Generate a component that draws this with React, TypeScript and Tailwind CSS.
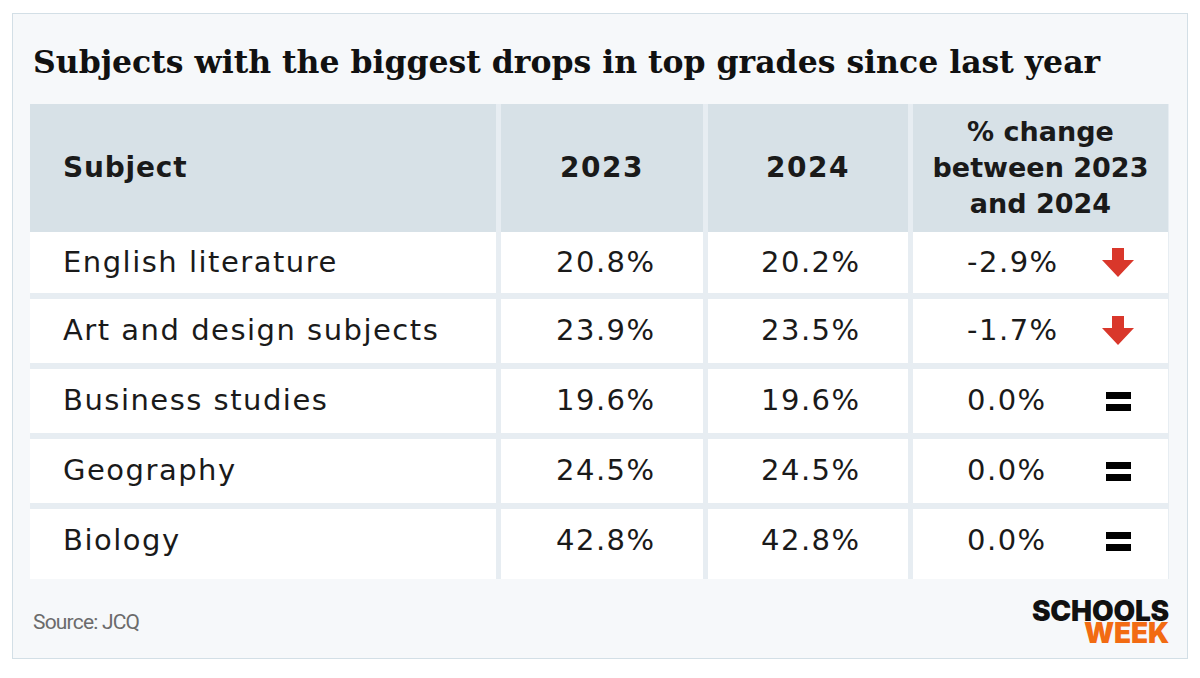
import React from "react";

type Row = { subject: string; y23: string; y24: string; change: string; dir: "down" | "same"; h: string };

const rows: Row[] = [
  { subject: "English literature", y23: "20.8%", y24: "20.2%", change: "-2.9%", dir: "down", h: "h-[61px]" },
  { subject: "Art and design subjects", y23: "23.9%", y24: "23.5%", change: "-1.7%", dir: "down", h: "h-[64px]" },
  { subject: "Business studies", y23: "19.6%", y24: "19.6%", change: "0.0%", dir: "same", h: "h-[64px]" },
  { subject: "Geography", y23: "24.5%", y24: "24.5%", change: "0.0%", dir: "same", h: "h-[64px]" },
  { subject: "Biology", y23: "42.8%", y24: "42.8%", change: "0.0%", dir: "same", h: "h-[70px] pb-[6px]" },
];

function DownArrow() {
  return (
    <svg width="34" height="30" viewBox="0 0 34 30">
      <path d="M11 0 H23 V12 H33 L17 29 L1 12 H11 Z" fill="#d9372b" />
    </svg>
  );
}

function Same() {
  return (
    <div className="flex flex-col gap-[5px]">
      <div className="w-[25px] h-[7px] bg-black" />
      <div className="w-[25px] h-[7px] bg-black" />
    </div>
  );
}

export default function App() {
  const body = "font-['DejaVu_Sans',sans-serif]";
  const cell = "bg-white flex items-center text-[29px] tracking-[1.5px]";
  return (
    <div className="w-[1200px] h-[678px] bg-white pt-[13px] pl-[12px]">
      <div className="w-[1176px] h-[646px] border border-[#d3dfe6] bg-[#f6f8fa] pl-[17px] pt-[26px]">
        <h1 className="font-['DejaVu_Serif',serif] font-bold text-[31.5px] leading-[44px] text-[#111] pl-[3px]">
          Subjects with the biggest drops in top grades since last year
        </h1>
        <div
          className={`mt-[20px] w-[1139px] grid grid-cols-[466px_202px_200px_255px] gap-x-[5px] gap-y-[6px] bg-[#e7edf2] text-[#1a1a1a] ${body}`}
        >
          <div className="h-[128px] bg-[#d7e1e7] flex items-center pl-[33px] font-bold text-[28px] tracking-[0.8px]">Subject</div>
          <div className="h-[128px] bg-[#d7e1e7] flex items-center justify-center font-bold text-[28px] tracking-[1.5px]">2023</div>
          <div className="h-[128px] bg-[#d7e1e7] flex items-center justify-center font-bold text-[28px] tracking-[1.5px]">2024</div>
          <div className="h-[128px] bg-[#d7e1e7] flex items-center justify-center text-center font-bold text-[27px] leading-[36px]">
            % change
            <br />
            between 2023
            <br />
            and 2024
          </div>
          {rows.map((r, i) => {
            const top = i === 0 ? "-mt-[6px]" : "";
            return (
              <React.Fragment key={r.subject}>
                <div className={`${r.h} ${top} ${cell} pl-[33px]`}>{r.subject}</div>
                <div className={`${r.h} ${top} ${cell} pl-[55px]`}>{r.y23}</div>
                <div className={`${r.h} ${top} ${cell} pl-[53px]`}>{r.y24}</div>
                <div className={`${r.h} ${top} ${cell}`}>
                  <span className="pl-[54px] w-[188px]">{r.change}</span>
                  <span className="w-[34px] flex justify-center">{r.dir === "down" ? <DownArrow /> : <Same />}</span>
                </div>
              </React.Fragment>
            );
          })}
        </div>
        <div className="flex items-end justify-between w-[1139px] mt-[21px]">
          <div className="font-['Roboto',sans-serif] text-[21px] tracking-[-0.8px] text-[#6b6b6b] pl-[3px] pb-[6px]">
            Source: JCQ
          </div>
          <div className="flex flex-col items-end font-['Inter',sans-serif] font-black tracking-[-0.2px]">
            <span className="text-[28px] leading-[22px] text-[#111]">SCHOOLS</span>
            <span className="text-[28px] leading-[22px] text-[#f26b12]">WEEK</span>
          </div>
        </div>
      </div>
    </div>
  );
}
